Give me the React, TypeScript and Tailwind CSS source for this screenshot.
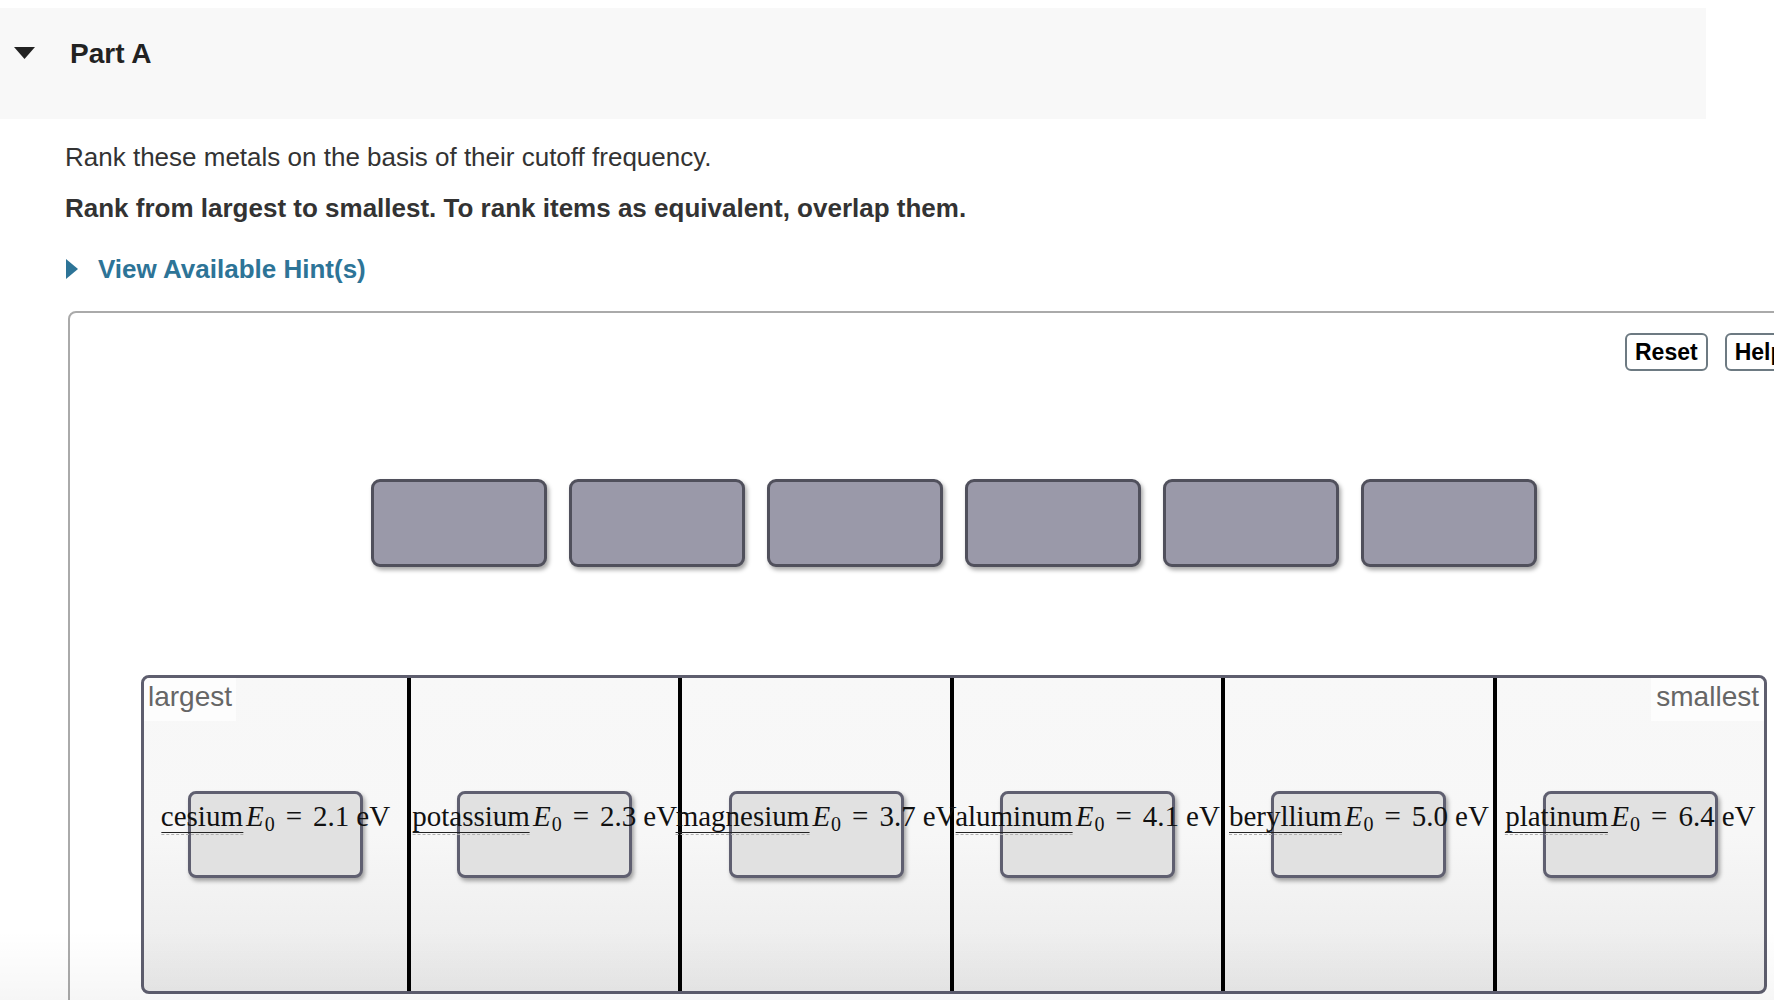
import React from "react";

const items = [
  { name: "cesium", v: "2.1" },
  { name: "potassium", v: "2.3" },
  { name: "magnesium", v: "3.7" },
  { name: "aluminum", v: "4.1" },
  { name: "beryllium", v: "5.0" },
  { name: "platinum", v: "6.4" },
];

function MathLabel({ name, v }: { name: string; v: string }) {
  return (
    <div
      className="absolute left-1/2 top-[124px] -translate-x-1/2 whitespace-nowrap text-[29px] leading-[29px] text-[#111]"
      style={{ fontFamily: '"Liberation Serif", "DejaVu Serif", serif' }}
    >
      <span className="pb-[2px] border-b border-dashed border-[#b0b0b0]">
        <span className="border-b border-[#222]">{name}</span>
      </span>
      <span className="italic ml-[3px]">E</span>
      <span className="text-[20px] relative top-[5px] ml-[1px]">0</span>
      <span className="ml-[11px]">=</span>
      <span className="ml-[11px]">{v}</span>
      <span className="ml-[7px]">eV</span>
    </div>
  );
}

export default function App() {
  return (
    <div
      className="relative w-[1774px] h-[1000px] overflow-hidden bg-white text-[#333]"
      style={{ fontFamily: '"Liberation Sans", Arial, sans-serif' }}
    >
      {/* Header band */}
      <div className="mt-[8px] h-[111px] w-[1706px] bg-[#f8f8f8] flex items-start pt-[30px] pl-[14px]">
        <svg width="21" height="12" viewBox="0 0 21 12" className="mt-[9px]">
          <polygon points="0,0 21,0 10.5,12" fill="#222" />
        </svg>
        <div className="ml-[35px] text-[28px] leading-[32px] font-bold text-[#222]">Part A</div>
      </div>

      <div className="pl-[65px]">
        <p className="mt-[23px] text-[26px] leading-[30px] text-[#333]">
          Rank these metals on the basis of their cutoff frequency.
        </p>
        <p className="mt-[21px] text-[26px] leading-[30px] font-bold text-[#333]">
          Rank from largest to smallest. To rank items as equivalent, overlap them.
        </p>
        <div className="mt-[31px] flex items-center h-[30px]">
          <svg width="12" height="20" viewBox="0 0 12 20" className="ml-[1px]">
            <polygon points="0,0 12,10 0,20" fill="#2d7497" />
          </svg>
          <span className="ml-[20px] text-[26px] leading-[30px] font-bold text-[#2d7497]">
            View Available Hint(s)
          </span>
        </div>

        {/* Main container */}
        <div className="mt-[27px] ml-[3px] w-[1772px] h-[760px] border-2 border-[#aaaaaa] rounded-tl-[8px] bg-white">
          {/* Buttons */}
          <div className="mt-[20px] flex gap-[17px] pl-[1555px]">
            <button className="h-[38px] px-[8px] border-2 border-[#6d7a82] rounded-[6px] bg-white text-[23px] font-bold text-black leading-[34px]">
              Reset
            </button>
            <button className="h-[38px] px-[8px] border-2 border-[#6d7a82] rounded-[6px] bg-white text-[23px] font-bold text-black leading-[34px]">
              Help
            </button>
          </div>

          {/* Tiles */}
          <div className="mt-[108px] flex justify-center gap-[22px]">
            {items.map((it) => (
              <div
                key={it.name}
                className="w-[176px] h-[88px] rounded-[9px] border-[3px] border-[#50505c] bg-[#9a99a9] shadow-[2px_3px_4px_rgba(0,0,0,0.35)]"
              />
            ))}
          </div>

          {/* Ranking box */}
          <div className="mt-[108px] mx-auto w-[1626px] h-[319px] relative border-[3px] border-[#5e5e6e] rounded-[8px] bg-gradient-to-b from-[#f8f8f8] via-[#f7f7f7] to-[#eaeaea] flex">
            {items.map((it, i) => (
              <React.Fragment key={it.name}>
                {i > 0 && <div className="w-[4px] bg-black shrink-0" />}
                <div
                  className={
                    i === 0
                      ? "relative w-[263px] shrink-0 flex items-center justify-center"
                      : "relative flex-1 flex items-center justify-center"
                  }
                >
                  <div className="w-[175px] h-[87px] rounded-[8px] border-[3px] border-[#5f5f70] bg-[#e1e1e1] shadow-[2px_3px_4px_rgba(0,0,0,0.35)]" />
                  <MathLabel name={it.name} v={it.v} />
                </div>
              </React.Fragment>
            ))}
            <div className="absolute left-0 top-0 bg-[#fdfdfd] rounded-tl-[6px] px-[4px] pt-[3px] pb-[8px] text-[28px] leading-[32px] text-[#666]">
              largest
            </div>
            <div className="absolute right-0 top-0 bg-[#fdfdfd] rounded-tr-[6px] px-[5px] pt-[3px] pb-[8px] text-[28px] leading-[32px] text-[#666]">
              smallest
            </div>
          </div>
        </div>
      </div>

      <div className="pointer-events-none absolute left-0 bottom-0 w-full h-[70px] bg-gradient-to-b from-transparent to-[rgba(0,0,0,0.035)]" />
    </div>
  );
}
